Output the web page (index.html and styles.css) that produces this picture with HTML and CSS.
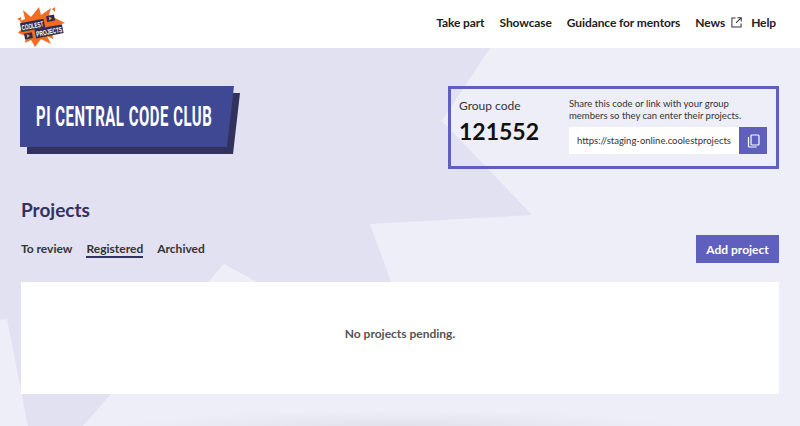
FILE: index.html
```html
<!DOCTYPE html>
<html lang="en">
<head>
    <meta charset="UTF-8">
    <meta name="viewport" content="width=device-width, initial-scale=1.0">
    <title>Pi Central Code Club</title>
    <link rel="stylesheet" href="styles.css">
</head>
<body>

<header class="site-header">
    <a class="logo" href="#">
        <svg width="52" height="42" viewBox="0 0 52 42">
            <polygon class="logo-star" points="9,4 17,11 25,1 27,9 37,2 35,9 51,17 38,21 39,33 33,30 37,38 27,33 21,41 17,34 11,37 12,30 4,27 9,21 6,15 11,13"/>
            <polygon class="logo-star" points="3,13 7,11 7,15"/>
            <polygon class="logo-star" points="38,3 41,1 41,6"/>
            <g transform="rotate(-11 26 21)">
                <rect class="logo-bar" x="7" y="13.5" width="24" height="9"/>
                <rect class="logo-bar" x="34" y="11.500" width="8" height="6"/>
                <rect class="logo-bar" x="20" y="22.5" width="28" height="9"/>
                <rect class="logo-bar" x="9" y="24.5" width="8" height="6"/>
                <polygon class="logo-arrow" points="36.500,12.500 39.500,14.500 36.500,16.500"/>
                <polygon class="logo-arrow" points="11.5,25.500 14.500,27.500 11.5,29.500"/>
                <text class="logo-text" transform="translate(8 21) scale(.6 1)">COOLEST</text>
                <text class="logo-text" transform="translate(21 30) scale(.65 1)">PROJECTS</text>
            </g>
        </svg>
    </a>
    <nav class="site-nav">
        <a href="#">Take part</a>
        <a href="#">Showcase</a>
        <a href="#">Guidance for mentors</a>
        <a class="nav-external" href="#">News
            <svg width="11" height="11" viewBox="0 0 12 12">
                <path d="M5 1H1v10h10V7M7 .8h4.2V5M11 1L5.5 6.5"/>
            </svg>
        </a>
        <a href="#">Help</a>
    </nav>
</header>

<main class="page">
    <section class="hero">
        <div class="club-title">
            <h1><span>PI CENTRAL CODE CLUB</span></h1>
        </div>
        <div class="group-box">
            <div class="group-code">
                <div class="group-label">Group code</div>
                <div class="group-number">121552</div>
            </div>
            <div class="group-share">
                <p>Share this code or link with your group members so they can enter their projects.</p>
                <div class="share-row">
                    <input class="share-link" type="text" value="https://staging-online.coolestprojects.org/join/121552" readonly>
                    <button class="copy-btn" type="button" aria-label="Copy">
                        <svg width="13" height="14" viewBox="0 0 13 14">
                            <rect x="4" y="1" width="8" height="10" rx="1"/>
                            <path d="M2 3.5H1.500V12a1 1 0 0 0 1 1H9v-.5"/>
                        </svg>
                    </button>
                </div>
            </div>
        </div>
    </section>

    <section class="projects">
        <h2>Projects</h2>
        <div class="projects-bar">
            <div class="tabs">
                <a href="#">To review</a>
                <a class="active" href="#">Registered</a>
                <a href="#">Archived</a>
            </div>
            <button class="add-btn" type="button">Add project</button>
        </div>
        <div class="empty-card">No projects pending.</div>
    </section>
</main>

</body>
</html>
```

FILE: styles.css
```css
body {
    font-family: Lato, "Open Sans", sans-serif;
    background-color: #fff;
    margin: 0;
    padding: 0;
    height: 426px;
    overflow: hidden;
}
a {
    color: inherit;
    text-decoration: none;
}
.site-header {
    display: flex;
    justify-content: space-between;
    align-items: center;
    height: 48px;
    padding: 0 24px 0 14px;
    background-color: #fff;
}
.logo {
    display: block;
    height: 42px;
    margin-top: 5px;
}
.logo-star {
    fill: #f26c23;
}
.logo-bar {
    fill: #2e2c4f;
}
.logo-arrow {
    fill: #f5a13a;
}
.logo-text {
    fill: #fff;
    font-family: "Liberation Sans", sans-serif;
    font-size: 7.5px;
    font-weight: 700;
}
.site-nav {
    display: flex;
    gap: 15px;
    font-size: 12px;
    font-weight: 700;
    letter-spacing: -0.1px;
    color: #222;
    margin-top: -4px;
}
.nav-external {
    display: flex;
    align-items: center;
    gap: 6px;
    margin-right: -6px;
}
.nav-external svg {
    fill: none;
    stroke: #333;
    stroke-width: 1.1;
}

.page {
    position: relative;
    height: 378px;
    background-color: #eeeef8;
    overflow: hidden;
}
/* the big star behind everything, plus the soft shade at the bottom */
.page::before {
    content: "";
    position: absolute;
    top: 0;
    left: 0;
    width: 800px;
    height: 378px;
    background-color: #e1e1f1;
    clip-path: polygon(0 0, 490px 0, 442px 73px, 532px 167px, 370px 176px, 391px 234px, 257px 234px, 224px 216px, 83px 378px, 28px 378px, 7px 271px, 0 272px);
}
.page::after {
    content: "";
    position: absolute;
    left: 0;
    bottom: 0;
    width: 800px;
    height: 24px;
    background: radial-gradient(ellipse 280px 16px at 400px 100%, rgba(60, 60, 60, 0.07), rgba(60, 60, 60, 0));
}
.hero, .projects {
    position: relative;
    z-index: 1;
}
.hero {
    display: flex;
    justify-content: space-between;
    align-items: flex-start;
    padding: 38px 21px 0 20px;
}
.club-title {
    position: relative;
    width: 220px;
    height: 68px;
}
.club-title::before {
    content: "";
    position: absolute;
    top: 7px;
    left: 7px;
    width: 213px;
    height: 61px;
    background-color: #32325d;
    clip-path: polygon(0 0, 100% 0, calc(100% - 7px) 100%, 0 100%);
}
.club-title h1 {
    position: relative;
    display: flex;
    align-items: center;
    width: 214px;
    height: 61px;
    margin: 0;
    padding-left: 16px;
    box-sizing: border-box;
    background-color: #3f4993;
    clip-path: polygon(0 0, 100% 0, calc(100% - 7px) 100%, 0 100%);
    color: #fff;
    font-family: Roboto, sans-serif;
    font-size: 28px;
    font-weight: 700;
    letter-spacing: 1px;
    white-space: nowrap;
}
.club-title h1 span {
    display: inline-block;
    transform: scaleX(0.533);
    transform-origin: left center;
}
.group-box {
    display: flex;
    width: 331px;
    height: 83px;
    box-sizing: border-box;
    border: 3px solid #5f5fbd;
    padding: 9px 9px 0 8px;
}
.group-code {
    width: 110px;
}
.group-label {
    font-size: 12px;
    color: #333;
}
.group-number {
    font-size: 23px;
    font-weight: 700;
    color: #111;
    margin-top: 4px;
}
.group-share p {
    margin: 0 0 5px;
    font-size: 9.500px;
    line-height: 12px;
    width: 185px;
    color: #333;
}
.share-row {
    display: flex;
    width: 198px;
    height: 27px;
}
.share-link {
    width: 170px;
    box-sizing: border-box;
    padding: 0 8px;
    border: 0;
    background-color: #fff;
    font-family: inherit;
    font-size: 9.500px;
    color: #333;
}
.copy-btn {
    display: flex;
    align-items: center;
    justify-content: center;
    width: 28px;
    padding: 0;
    border: 0;
    background-color: #5f5fbd;
}
.copy-btn svg {
    fill: none;
    stroke: #fff;
    stroke-width: 1.2;
}

.projects {
    padding: 0 21px;
}
.projects h2 {
    margin: 28px 0 0;
    font-size: 19px;
    line-height: 26px;
    font-weight: 700;
    color: #32325d;
}
.projects-bar {
    display: flex;
    justify-content: space-between;
    align-items: flex-start;
    margin-top: 12px;
}
.tabs {
    display: flex;
    gap: 14px;
    font-size: 12px;
    font-weight: 700;
    color: #333;
    padding-top: 7px;
}
.tabs a {
    line-height: 14px;
    border-bottom: 2px solid transparent;
}
.tabs a.active {
    border-bottom-color: #32325d;
}
.add-btn {
    width: 83px;
    height: 28px;
    padding: 0;
    border: 0;
    background-color: #5f5fbd;
    color: #fff;
    font-family: inherit;
    font-size: 12px;
    font-weight: 700;
}
.empty-card {
    display: flex;
    justify-content: center;
    align-items: center;
    height: 102px;
    margin-top: 19px;
    padding-bottom: 10px;
    background-color: #fff;
    font-size: 12px;
    font-weight: 700;
    color: #555;
}
```
